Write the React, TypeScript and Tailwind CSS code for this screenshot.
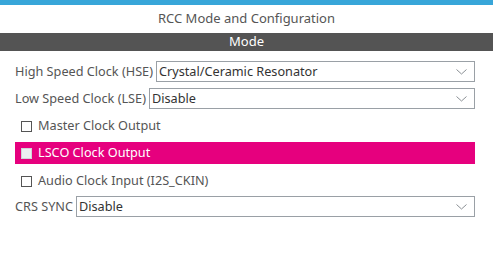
const font = { fontFamily: '"Noto Sans", "Open Sans", sans-serif' };

function Select({ value }: { value: string }) {
  return (
    <div className="flex-1 h-[21px] border border-[#9aa0a6] bg-white flex items-center justify-between pl-[2px] pr-[7px] text-[12.7px] text-[#333]">
      <span>{value}</span>
      <svg width="11" height="6" viewBox="0 0 11 6" className="text-[#8a8f94]">
        <polyline points="0.5,0.5 5.5,5 10.5,0.5" fill="none" stroke="currentColor" strokeWidth="1" />
      </svg>
    </div>
  );
}

function CheckRow({ label, active }: { label: string; active?: boolean }) {
  return (
    <div
      className={`h-[22px] flex items-center pl-[6px] gap-[6px] text-[12.7px] ${
        active ? "bg-[#e6007e] text-white" : "text-[#555]"
      }`}
    >
      <span
        className={`w-[11px] h-[11px] border ${
          active ? "border-[#cfd4d8] bg-[#eceff1]" : "border-[#555] bg-white"
        }`}
      />
      <span>{label}</span>
    </div>
  );
}

export default function App() {
  return (
    <div className="w-[493px] h-[257px] bg-white" style={font}>
      <div className="h-[5px] bg-[#38a6d9]" />
      <div className="h-[28px] flex items-center justify-center text-[13px] text-[#555]">
        RCC Mode and Configuration
      </div>
      <div className="h-[18px] bg-[#545454] flex items-center justify-center text-[13px] text-white">
        Mode
      </div>
      <div className="pl-[15px] pr-[18px] pt-[10px] flex flex-col">
        <div className="flex items-center gap-[3px]">
          <span className="text-[12.7px] text-[#555] whitespace-nowrap">High Speed Clock (HSE)</span>
          <Select value="Crystal/Ceramic Resonator" />
        </div>
        <div className="flex items-center gap-[3px] mt-[6px]">
          <span className="text-[12.7px] text-[#555] whitespace-nowrap">Low Speed Clock (LSE)</span>
          <Select value="Disable" />
        </div>
        <div className="mt-[6px]">
          <CheckRow label="Master Clock Output" />
        </div>
        <div className="mt-[5px]">
          <CheckRow label="LSCO Clock Output" active />
        </div>
        <div className="mt-[6px]">
          <CheckRow label="Audio Clock Input (I2S_CKIN)" />
        </div>
        <div className="flex items-center gap-[3px] mt-[4px]">
          <span className="text-[12.7px] text-[#555] whitespace-nowrap">CRS SYNC</span>
          <Select value="Disable" />
        </div>
      </div>
    </div>
  );
}
